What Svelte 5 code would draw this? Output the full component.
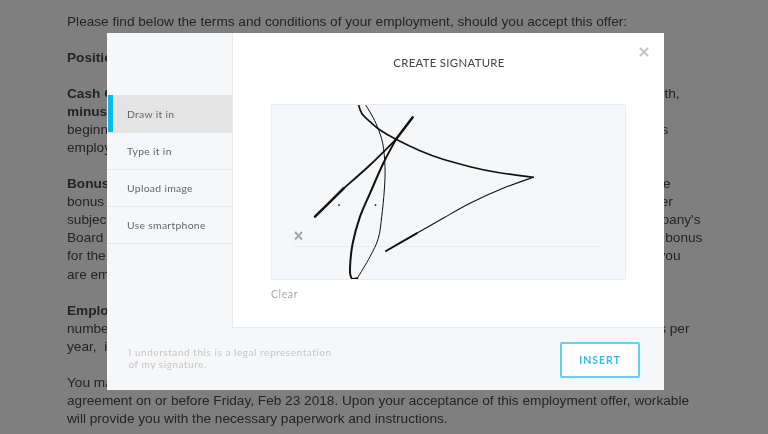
<script lang="ts">
  const tabs = ['Draw it in', 'Type it in', 'Upload image', 'Use smartphone'];
  let active = $state(0);

  // catmull-rom through hand-picked points, in screen coordinates
  function smooth(p: number[][]) {
    let d = `M${p[0][0]} ${p[0][1]}`;
    for (let i = 0; i < p.length - 1; i++) {
      const a = p[i - 1] ?? p[i];
      const b = p[i];
      const c = p[i + 1];
      const e = p[i + 2] ?? c;
      const c1 = [b[0] + (c[0] - a[0]) / 6, b[1] + (c[1] - a[1]) / 6];
      const c2 = [c[0] - (e[0] - b[0]) / 6, c[1] - (e[1] - b[1]) / 6];
      d += ` C${c1[0].toFixed(1)} ${c1[1].toFixed(1)} ${c2[0].toFixed(1)} ${c2[1].toFixed(1)} ${c[0]} ${c[1]}`;
    }
    return d;
  }

  const strokes = [
    { w: 2.5, p: [[315, 216.7], [343.5, 188.5]] },
    { w: 1.8, p: [[343.5, 188.5], [370, 165], [396, 139.3]] },
    { w: 2.5, p: [[396, 139.3], [412.7, 117.3]] },
    { w: 1.6, p: [[358.3, 104], [361.7, 113.3], [370, 121.7], [380, 130], [396, 139.3], [420, 150.7], [443, 159.3], [470, 166.7], [496.7, 172.3], [533.3, 177.3]] },
    { w: 1.1, p: [[533.3, 177.3], [503, 188.3], [470, 203.3], [443, 218.3], [416.7, 233.3]] },
    { w: 2, p: [[416.7, 233.3], [386, 251]] },
    { w: 1, p: [[365, 104], [371.7, 115], [377.3, 126.7], [382.7, 143.3], [385, 166.7], [384.3, 190], [381.7, 216.7], [378.3, 238.3], [370, 256.7], [357.3, 278.3]] },
    { w: 2, p: [[357.3, 278.3], [351.7, 278.3], [350, 268.3], [352.7, 243.3], [360, 216.7], [370, 193.3], [383.3, 163.3], [396, 139.3]] }
  ];
</script>

<div class="page">
  <p>Please find below the terms and conditions of your employment, should you accept this offer:</p>
  <p><b>Position:</b> Senior Product Designer</p>
  <p><b>Cash Compensation:</b> you will be paid a fixed starting salary at the monthly rate of $8,000 per month,<br />
    <b>minus</b> applicable withholdings and deductions, payable monthly,<br />
    beginning on your first day of work and continuing for as long as you remain with us, under its terms<br />
    employment continues</p>
  <p><b>Bonus:</b> you shall also be eligible to receive one discretionary performance bonus, by your start date<br />
    bonus of up to ten percent of your annual salary for each full year, paid after the end of every quarter<br />
    subject to achievement of the targets and milestones, as determined by the Company and the company's<br />
    Board of Directors in its sole discretion. You must remain employed in good standing to receive the bonus<br />
    for the applicable year, and no bonus is earned, unless on the date of the actual, full payment of it you<br />
    are employed</p>
  <p><b>Employment Benefits:</b> you will be eligible for the benefits and a<br />
    number of paid vacation and sick days as set out in the company policy currently set at twenty days per<br />
    year,&nbsp; in accordance with applicable policies</p>
  <p>You may accept this offer of employment by signing and returning this<br />
    agreement on or before Friday, Feb 23 2018. Upon your acceptance of this employment offer, workable<br />
    will provide you with the necessary paperwork and instructions.</p>
</div>

<div class="overlay">
  <div class="modal">
    <div class="top">
      <nav class="side">
        {#each tabs as tab, i}
          <button class="tab" class:active={i === active} onclick={() => (active = i)}>{tab}</button>
        {/each}
      </nav>
      <div class="panel">
        <button class="close" aria-label="Close">
          <svg width="10" height="10" viewBox="0 0 10 10"><path d="M1 1L9 9M9 1L1 9" /></svg>
        </button>
        <h1>CREATE SIGNATURE</h1>
        <div class="canvas">
          <svg viewBox="271 104 355 176" width="355" height="176">
            <line class="base" x1="294" y1="246.5" x2="602" y2="246.5" />
            <path class="mark" d="M295 232L302 239.5M302 232L295 239.5" />
            {#each strokes as s}
              <path class="ink" d={smooth(s.p)} stroke-width={s.w} />
            {/each}
            <circle cx="339" cy="205" r="0.9" />
            <circle cx="375.5" cy="205" r="0.9" />
          </svg>
        </div>
        <button class="clear">Clear</button>
      </div>
    </div>
    <div class="foot">
      <p class="legal">I understand this is a legal representation<br />of my signature.</p>
      <button class="insert">INSERT</button>
    </div>
  </div>
</div>

<style>
  :global(body) { background: #fff; }

  .page {
    height: 434px; box-sizing: border-box; overflow: hidden;
    padding: 12.5px 0 0 67px; width: 768px;
    font-family: "Liberation Sans", Arial, sans-serif; font-size: 13.65px; line-height: 18.1px;
    color: #484848; white-space: nowrap; filter: blur(0.4px);
  }
  .page p { margin: 0 0 18px; }

  .overlay {
    position: fixed; inset: 0; background: rgba(0, 0, 0, 0.5);
    display: flex; align-items: flex-start; padding: 33px 0 0 107px;
    font-family: Lato, "Open Sans", sans-serif;
  }
  .modal {
    width: 557px; height: 357px; background: #f6f7f9; filter: blur(0.3px);
    display: flex; flex-direction: column; flex-shrink: 0;
  }
  .top { display: flex; height: 295px; }

  .side { width: 125px; flex-shrink: 0; padding-top: 62px; display: flex; flex-direction: column; }
  .tab {
    height: 37px; padding: 0 0 0 20px; text-align: left; background: none; border: 0;
    border-bottom: 1px solid #e8e9eb;
    font: inherit; font-size: 10.4px; letter-spacing: 0.3px; color: #666;
  }
  .tab:first-child { height: 38px; }
  .tab.active { background: #e4e4e4; box-shadow: inset 5px 0 0 #0fb8ea; margin-left: 1px; padding-left: 19px; border-bottom-color: #e4e4e4; }

  .panel {
    flex: 1; background: #fff; position: relative;
    border-left: 1px solid #e8e9eb; border-bottom: 1px solid #e8e9eb;
    display: flex; flex-direction: column; padding-left: 38px;
  }
  .close { position: absolute; top: 14px; right: 15px; background: none; border: 0; padding: 0; display: flex; }
  .close path { stroke: #c6c6c6; stroke-width: 2.2; fill: none; }

  h1 {
    margin: 23px 0 0; padding-right: 37px; height: 48px; text-align: center;
    font-size: 11.4px; line-height: 13px; font-weight: 400; letter-spacing: 0.3px; color: #444;
  }
  .canvas {
    width: 355px; height: 176px; box-sizing: border-box;
    background: #f6f7f9; outline: 1px solid #ececee; outline-offset: -1px;
  }
  .canvas svg { display: block; }
  .base { stroke: #ebebed; stroke-width: 1; }
  .mark { stroke: #a8a8a8; stroke-width: 2; fill: none; }
  .ink { stroke: #111; fill: none; stroke-linecap: round; stroke-linejoin: round; }
  .canvas circle { fill: #333; }

  .clear {
    align-self: flex-start; margin-top: 8px; padding: 0; background: none; border: 0;
    font: inherit; font-size: 10.5px; line-height: 13px; letter-spacing: 0.6px; color: #aaa;
  }

  .foot { flex: 1; display: flex; align-items: flex-start; justify-content: space-between; padding: 14px 24px 0 21.5px; }
  .legal {
    margin: 4px 0 0; font-size: 10px; line-height: 12px; letter-spacing: 0.55px; color: #c6c6c6;
  }
  .insert {
    width: 80px; height: 36px; box-sizing: border-box; background: #fff;
    border: 2px solid #62d0f2; border-radius: 2px;
    font: inherit; font-size: 10.5px; font-weight: 700; letter-spacing: 0.9px; color: #2fbdea;
  }
</style>
